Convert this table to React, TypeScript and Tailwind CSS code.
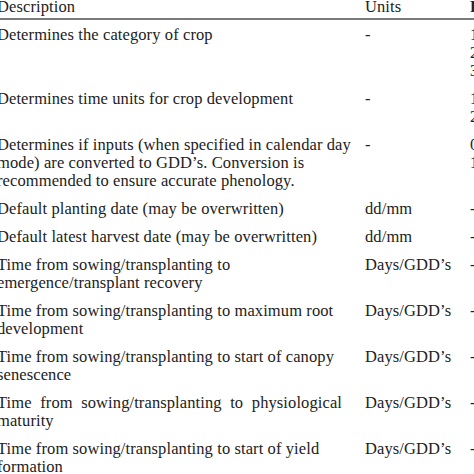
type Row = {
  description: string[];
  justifyFirst?: boolean;
  units: string;
  values: string[];
};

const rows: Row[] = [
  {
    description: ["Determines the category of crop"],
    units: "-",
    values: ["1 = Leafy vegetable crop", "2 = Root/tuber crop", "3 = Fruit/grain producing crop"],
  },
  {
    description: ["Determines time units for crop development"],
    units: "-",
    values: ["1 = Calendar days", "2 = Growing degree days"],
  },
  {
    description: [
      "Determines if inputs (when specified in calendar day",
      "mode) are converted to GDD’s. Conversion is",
      "recommended to ensure accurate phenology.",
    ],
    units: "-",
    values: ["0 = No", "1 = Yes"],
  },
  {
    description: ["Default planting date (may be overwritten)"],
    units: "dd/mm",
    values: ["-"],
  },
  {
    description: ["Default latest harvest date (may be overwritten)"],
    units: "dd/mm",
    values: ["-"],
  },
  {
    description: ["Time from sowing/transplanting to", "emergence/transplant recovery"],
    units: "Days/GDD’s",
    values: ["-"],
  },
  {
    description: ["Time from sowing/transplanting to maximum root", "development"],
    units: "Days/GDD’s",
    values: ["-"],
  },
  {
    description: ["Time from sowing/transplanting to start of canopy", "senescence"],
    units: "Days/GDD’s",
    values: ["-"],
  },
  {
    description: ["Time from sowing/transplanting to physiological", "maturity"],
    justifyFirst: true,
    units: "Days/GDD’s",
    values: ["-"],
  },
  {
    description: ["Time from sowing/transplanting to start of yield", "formation"],
    units: "Days/GDD’s",
    values: ["-"],
  },
];

export default function App() {
  return (
    <div className="h-[474px] w-[474px] overflow-hidden bg-white">
      <div
        className="-ml-[3px] -mt-[2px] w-[700px] text-[16.5px] leading-[18px] tracking-[0.1px] text-[#222]"
        style={{ fontFamily: '"Liberation Serif", "Times New Roman", serif' }}
      >
        <div className="grid h-[20px] grid-cols-[368px_105px_220px]">
          <div>Description</div>
          <div>Units</div>
          <div className="font-bold">Possible values</div>
        </div>
        <div className="h-[2px] w-[480px] bg-[#7a7a7a]" />
        {rows.map((row, index) => (
          <div
            key={index}
            className="grid grid-cols-[368px_105px_220px] pt-[6px] pb-[4px]"
          >
            <div className="w-[345px]">
              {row.description.map((line, i) => (
                <div
                  key={i}
                  className={
                    row.justifyFirst && i === 0
                      ? "text-justify [text-align-last:justify]"
                      : "whitespace-nowrap"
                  }
                >
                  {line}
                </div>
              ))}
            </div>
            <div className="whitespace-nowrap">{row.units}</div>
            <div>
              {row.values.map((value, i) => (
                <div key={i} className="whitespace-nowrap">
                  {value}
                </div>
              ))}
            </div>
          </div>
        ))}
      </div>
    </div>
  );
}
